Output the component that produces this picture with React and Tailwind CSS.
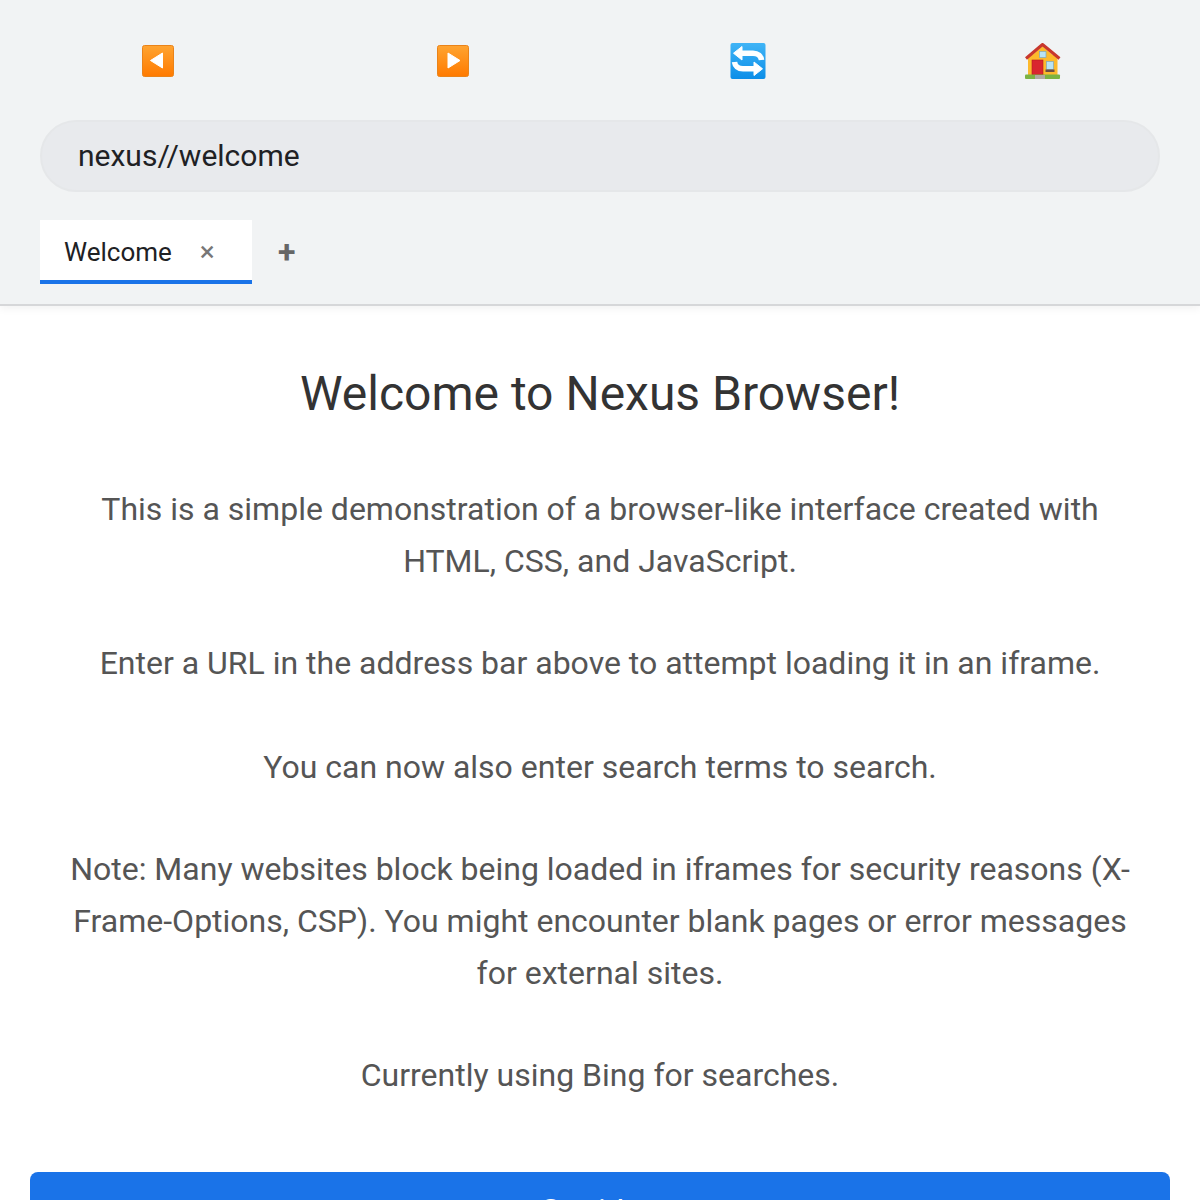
// Emoji font differs here, so the four toolbar icons are drawn
const ArrowSquare = ({ id, points }) => (
  <svg width="32" height="32" viewBox="0 0 32 32">
    <defs>
      <linearGradient id={id} x1="0" y1="0" x2="0" y2="1">
        <stop offset="0" stopColor="#ffa431" />
        <stop offset="1" stopColor="#ff7a00" />
      </linearGradient>
    </defs>
    <rect x="0.5" y="0.5" width="31" height="31" rx="2" fill={`url(#${id})`} stroke="#ea8319" />
    <polygon points={points} fill="#fff" stroke="#fff" strokeWidth="1" strokeLinejoin="round" />
  </svg>
);

const ReloadIcon = () => (
  <svg width="36" height="36" viewBox="0 0 36 36">
    <defs>
      <linearGradient id="reloadBg" x1="0" y1="0" x2="0" y2="1">
        <stop offset="0" stopColor="#40b4f6" />
        <stop offset="1" stopColor="#0c8ee8" />
      </linearGradient>
    </defs>
    <rect x="0.5" y="0" width="35" height="36" rx="2" fill="url(#reloadBg)" />
    <g fill="#fff" stroke="#fff" strokeLinejoin="round">
      <polygon points="12,3.5 12,17 3.5,10.2" />
      <path d="M12 10.2H23C28 10.2 31 13 31.500 17" fill="none" strokeWidth="5.500" />
      <polygon points="24,19 24,32.500 32.500,25.800" />
      <path d="M24 25.800H13C8 25.800 5 23 4.500 19" fill="none" strokeWidth="5.500" />
    </g>
  </svg>
);

const HouseIcon = () => (
  <svg width="36" height="36" viewBox="0 0 36 36">
    <rect x="3" y="12" width="29.500" height="20" fill="#fdb92c" />
    <polygon points="17.500,3 5,14 30,14" fill="#fdb92c" />
    <path d="M1 15.500L17.500 1.500L34.500 15.500" fill="none" stroke="#c8372d" strokeWidth="3" strokeLinejoin="round" />
    <rect x="14.500" y="8.500" width="6.500" height="6" fill="#b9e3f4" stroke="#7fa9b8" strokeWidth="0.700" />
    <rect x="7" y="17" width="11" height="15" fill="#d9262f" stroke="#b71c1c" strokeWidth="0.600" />
    <rect x="21.500" y="18.500" width="7" height="8" fill="#b9e3f4" stroke="#7fa9b8" strokeWidth="0.700" />
    <rect x="20.500" y="26.500" width="9" height="2.500" fill="#6d4c41" />
    <rect x="0" y="31.500" width="35" height="4.500" rx="1" fill="#7cb342" />
    <rect x="10" y="32" width="10" height="4" fill="#b0a9a2" />
  </svg>
);

const NavButton = ({ children }) => (
  <button className="flex-1 flex justify-center items-center">{children}</button>
);

export default function App() {
  return (
    <div className="h-[1200px] overflow-hidden bg-white font-['Roboto',sans-serif]">
      <header className="h-[306px] px-10 pt-[41px] bg-[#f1f3f4] border-b-2 border-[#d6d7d9] shadow-[0_3px_8px_rgba(0,0,0,0.05)]">
        <nav className="flex -mx-[30px] h-10">
          <NavButton><ArrowSquare id="backBg" points="8.500,15.500 20.500,8 20.500,23" /></NavButton>
          <NavButton><ArrowSquare id="forwardBg" points="23,15.500 11,8 11,23" /></NavButton>
          <NavButton><ReloadIcon /></NavButton>
          <NavButton><HouseIcon /></NavButton>
        </nav>
        <div className="mt-[39px] h-[72px] pb-px rounded-full bg-[#e8eaed] border-2 border-[#e5e7e9] flex items-center pl-[36px] text-[30px] text-[#202124]">
          nexus//welcome
        </div>
        <div className="mt-7 flex items-center">
          <div className="w-[212px] h-16 pt-1 bg-white border-b-4 border-[#1a73e8] flex items-center pl-6 text-[26px] text-[#202124]">
            Welcome
            <span className="ml-7 text-[28px] text-[#777]">×</span>
          </div>
          <span className="ml-[26px] text-[32px] font-bold text-[#666]">+</span>
        </div>
      </header>
      <main className="px-[30px] pt-[58px] text-center">
        <h1 className="text-[48px] leading-[60px] text-[#333]">Welcome to Nexus Browser!</h1>
        <div className="mt-[59px] px-[30px] text-[32px] leading-[52px] text-[#555]">
          <p>This is a simple demonstration of a browser-like interface created with HTML, CSS, and JavaScript.</p>
          <p className="mt-[50px]">Enter a URL in the address bar above to attempt loading it in an iframe.</p>
          <p className="mt-[52px]">You can now also enter search terms to search.</p>
          <p className="mt-[50px]">Note: Many websites block being loaded in iframes for security reasons (X-Frame-Options, CSP). You might encounter blank pages or error messages for external sites.</p>
          <p className="mt-[50px]">Currently using Bing for searches.</p>
        </div>
        <button className="mt-[71px] w-full h-20 pt-[18px] pr-9 rounded-lg bg-[#1a73e8] text-white text-[32px] leading-10 flex justify-center">Got it!</button>
      </main>
    </div>
  );
}
